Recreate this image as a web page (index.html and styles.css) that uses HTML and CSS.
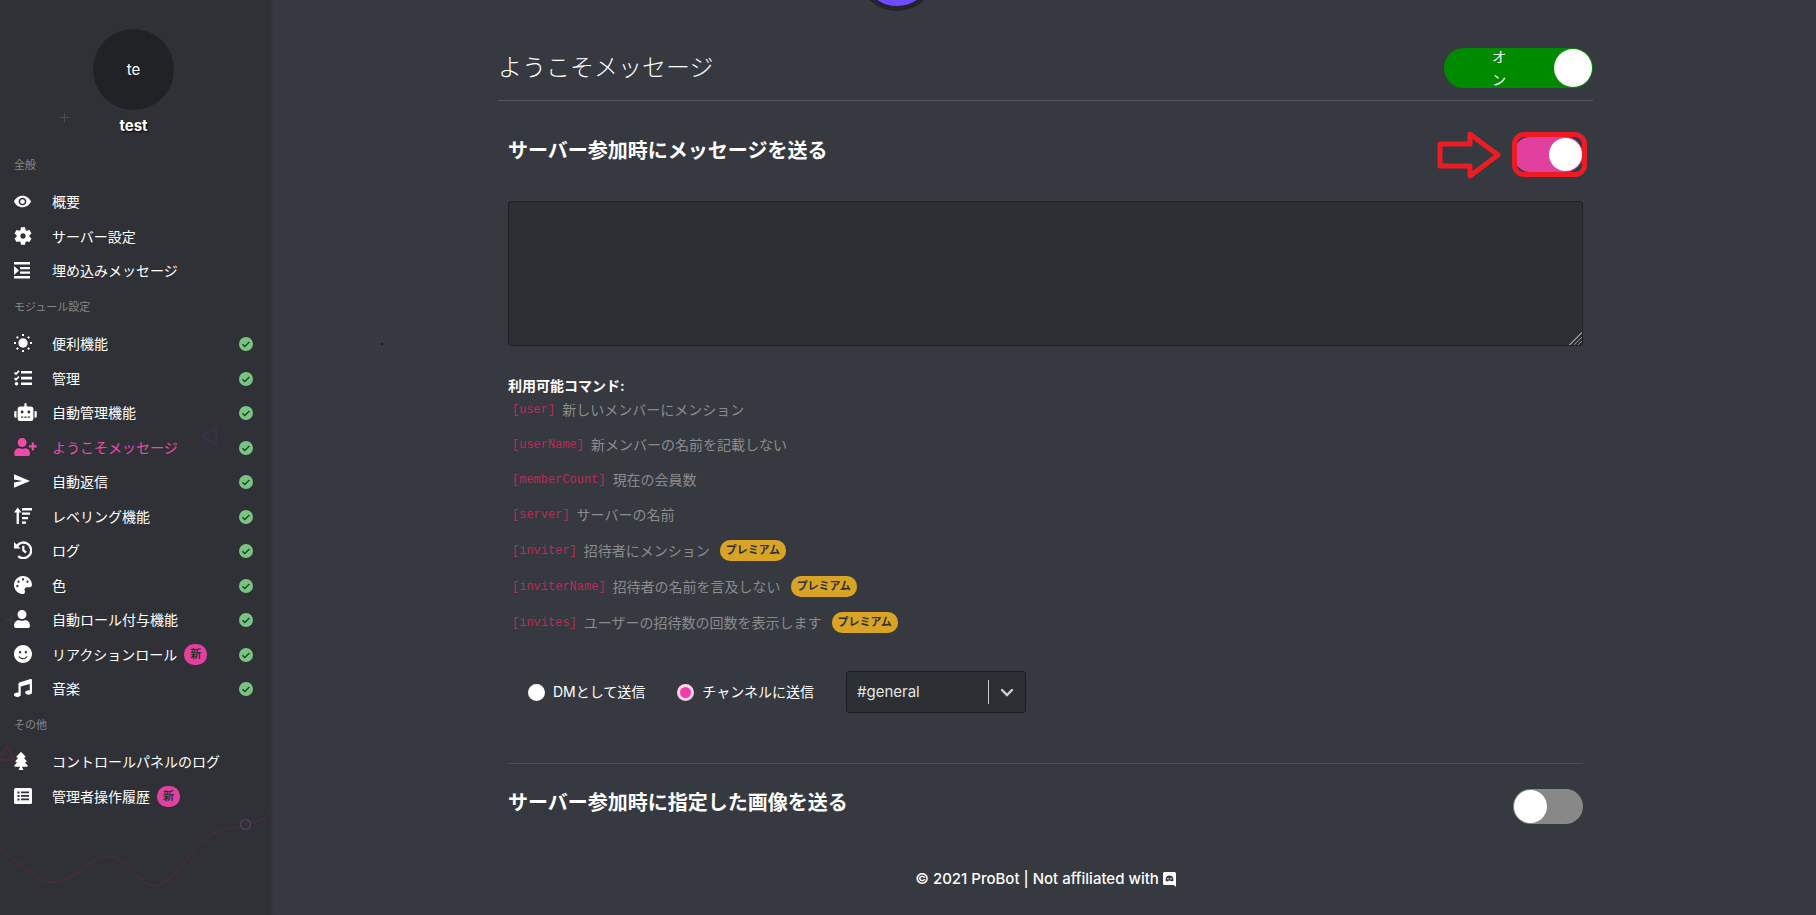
FILE: index.html
```html
<!DOCTYPE html>
<html lang="ja">
<head>
    <meta charset="UTF-8">
    <meta name="viewport" content="width=device-width, initial-scale=1.0">
    <title>ProBot - ようこそメッセージ</title>
    <link rel="stylesheet" href="styles.css">
</head>
<body>
    <!-- Shared icons -->
    <svg class="sprite" aria-hidden="true">
        <symbol id="i-check" viewBox="0 0 14 14">
            <circle cx="7" cy="7" r="7" fill="#7ac483"/>
            <path d="M3.400 7.200l2.400 2.300 4.600-4.600" fill="none" stroke="#27402c" stroke-width="1.400"/>
        </symbol>
    </svg>

    <aside class="sidebar">
        <svg class="sidebar-art" viewBox="0 0 270 915" fill="none" aria-hidden="true">
            <path d="M64.500 112.500v10M59.500 117.500h10" stroke="#484a50"/>
            <path d="M11 615v10M6 620h10" stroke="#3d4046"/>
            <path d="M216 428.500v16l-14-8z" stroke="#3d2f4a" stroke-width="2"/>
            <path d="M-3 760l10-13 7 13z" stroke="#4b2a40" stroke-width="2"/>
            <path d="M0 850C25 865 35 882 52 882C75 882 90 857 108 857C128 857 138 886 155 886C172 886 192 845 215 833C235 824 250 829 270 814" stroke="#432d3c" stroke-width="2"/>
            <circle cx="245.500" cy="824.500" r="5" fill="#3a2b3c" stroke="#4c4052" stroke-width="1.500"/>
        </svg>

        <div class="server">
            <div class="avatar">te</div>
            <strong class="server-name">test</strong>
        </div>

        <nav>
            <h3>全般</h3>
            <ul>
                <li><a href="#"><span class="icon"><svg width="17" height="17" viewBox="1 1 22 22"><path d="M12 4.500C7 4.500 2.730 7.610 1 12c1.730 4.390 6 7.500 11 7.500s9.270-3.110 11-7.500c-1.730-4.390-6-7.500-11-7.500zM12 17c-2.760 0-5-2.240-5-5s2.240-5 5-5 5 2.240 5 5-2.240 5-5 5zm0-8c-1.660 0-3 1.340-3 3s1.340 3 3 3 3-1.340 3-3-1.340-3-3-3z"/></svg></span>概要</a></li>
                <li><a href="#"><span class="icon"><svg width="18" height="18" viewBox="2 2 20 20"><path d="M19.140 12.940c.04-.3.06-.61.06-.94 0-.32-.02-.64-.07-.94l2.030-1.580c.18-.14.23-.41.12-.61l-1.920-3.320c-.12-.22-.37-.29-.59-.22l-2.390.96c-.5-.38-1.030-.7-1.620-.94l-.36-2.540c-.04-.24-.24-.41-.48-.41h-3.840c-.24 0-.43.17-.47.41l-.36 2.540c-.59.24-1.130.57-1.620.94l-2.390-.96c-.22-.08-.47 0-.59.22L2.740 8.870c-.12.21-.08.47.12.61l2.030 1.580c-.05.3-.09.63-.09.94s.02.64.07.94l-2.030 1.580c-.18.14-.23.41-.12.61l1.920 3.320c.12.22.37.29.59.22l2.390-.96c.5.38 1.030.7 1.620.94l.36 2.540c.05.24.24.41.48.41h3.840c.24 0 .44-.17.47-.41l.36-2.540c.59-.24 1.130-.56 1.620-.94l2.390.96c.22.08.47 0 .59-.22l1.920-3.320c.12-.22.07-.47-.12-.61l-2.010-1.580zM12 15c-1.660 0-3-1.340-3-3s1.340-3 3-3 3 1.340 3 3-1.340 3-3 3z"/></svg></span>サーバー設定</a></li>
                <li><a href="#"><span class="icon"><svg width="16" height="17" viewBox="0 0 16 17"><path d="M0 0h16v2.500H0zM6 5h10v2.200H6zM6 9.600h10v2.200H6zM0 14h16v2.500H0zM0 4v9l5-4.500z"/></svg></span>埋め込みメッセージ</a></li>
            </ul>

            <h3>モジュール設定</h3>
            <ul>
                <li><a href="#"><span class="icon"><svg width="18" height="18" viewBox="0 0 18 18"><circle cx="9" cy="9" r="4.700"/><path d="M8 0h2v2H8zM8 16h2v2H8zM0 8h2v2H0zM16 8h2v2h-2zM2 3.400L3.400 2l1.400 1.400-1.400 1.400zM13.200 3.400L14.600 2 16 3.400l-1.400 1.400zM2 14.600l1.400-1.400 1.400 1.400L3.400 16zM13.200 14.600l1.400-1.400 1.400 1.400-1.400 1.400z"/></svg></span>便利機能<svg class="check"><use href="#i-check"/></svg></a></li>
                <li><a href="#"><span class="icon"><svg width="18" height="16" viewBox="0 0 18 16"><path d="M7 1h11v2.600H7zM7 6.800h11v2.600H7zM7 12.500h11V15H7z"/><circle cx="2.500" cy="13.800" r="1.800"/><path d="M.5 2.500l1.500 1.500L5 .8M.5 8.200L2 9.700l3-3.200" fill="none" stroke="currentColor" stroke-width="1.700"/></svg></span>管理<svg class="check"><use href="#i-check"/></svg></a></li>
                <li><a href="#"><span class="icon"><svg width="23" height="18" viewBox="0 0 640 512"><path d="M32 224h32v192H32a32 32 0 0 1-32-32V256a32 32 0 0 1 32-32zm512-48v272a64 64 0 0 1-64 64H160a64 64 0 0 1-64-64V176a80 80 0 0 1 80-80h112V32a32 32 0 0 1 64 0v64h112a80 80 0 0 1 80 80zM264 256a40 40 0 1 0-40 40 40 40 0 0 0 40-40zm-8 128h-64v32h64zm96 0h-64v32h64zm104-128a40 40 0 1 0-40 40 40 40 0 0 0 40-40zm-8 128h-64v32h64zm192-128v128a32 32 0 0 1-32 32h-32V224h32a32 32 0 0 1 32 32z"/></svg></span>自動管理機能<svg class="check"><use href="#i-check"/></svg></a></li>
                <li class="active"><a href="#"><span class="icon"><svg width="23" height="18" viewBox="0 0 640 512"><path d="M624 208h-64v-64c0-8.800-7.200-16-16-16h-32c-8.800 0-16 7.200-16 16v64h-64c-8.800 0-16 7.200-16 16v32c0 8.800 7.200 16 16 16h64v64c0 8.800 7.200 16 16 16h32c8.800 0 16-7.200 16-16v-64h64c8.800 0 16-7.200 16-16v-32c0-8.800-7.200-16-16-16zm-400 48c70.700 0 128-57.300 128-128S294.700 0 224 0 96 57.300 96 128s57.300 128 128 128zm89.600 32h-16.700c-22.200 10.200-46.900 16-72.900 16s-50.600-5.800-72.900-16h-16.700C60.200 288 0 348.200 0 422.400V464c0 26.500 21.500 48 48 48h352c26.500 0 48-21.500 48-48v-41.600c0-74.200-60.200-134.400-134.400-134.400z"/></svg></span>ようこそメッセージ<svg class="check"><use href="#i-check"/></svg></a></li>
                <li><a href="#"><span class="icon"><svg width="16" height="14" viewBox="2 3 21 18"><path d="M2 21l21-9L2 3v7l11 2-11 2z"/></svg></span>自動返信<svg class="check"><use href="#i-check"/></svg></a></li>
                <li><a href="#"><span class="icon"><svg width="18" height="17" viewBox="0 0 18 17"><path d="M2.600 17V5.500H0L3.700.5l3.800 5H4.900V17zM8 1h10v2.400H8zM8 5.500h8v2.300H8zM8 10h6v2.300H8zM8 14.500h4v2.300H8z"/></svg></span>レベリング機能<svg class="check"><use href="#i-check"/></svg></a></li>
                <li><a href="#"><span class="icon"><svg width="18" height="18" viewBox="0 0 18 18"><path d="M3 4.800A7.800 7.800 0 1 1 4.200 15.200" fill="none" stroke="currentColor" stroke-width="2.400"/><path d="M0 1v6.600h6.600z"/><path d="M9.300 4.800v4.700l2.800 2" fill="none" stroke="currentColor" stroke-width="2.200"/></svg></span>ログ<svg class="check"><use href="#i-check"/></svg></a></li>
                <li><a href="#"><span class="icon"><svg width="18" height="18" viewBox="0 0 512 512"><path d="M204.300 5C104.900 24.400 24.800 104.300 5.200 203.400c-37 187 131.700 326.400 258.800 306.700 41.200-6.400 61.400-54.600 42.500-91.700-23.100-45.400 9.900-98.400 60.900-98.400h79.700c35.800 0 64.800-29.600 64.900-65.300C511.500 97.100 368.100-26.900 204.300 5zM96 320c-17.700 0-32-14.300-32-32s14.300-32 32-32 32 14.300 32 32-14.300 32-32 32zm32-128c-17.700 0-32-14.300-32-32s14.300-32 32-32 32 14.300 32 32-14.300 32-32 32zm128-64c-17.700 0-32-14.300-32-32s14.300-32 32-32 32 14.300 32 32-14.300 32-32 32zm128 64c-17.700 0-32-14.300-32-32s14.300-32 32-32 32 14.300 32 32-14.300 32-32 32z"/></svg></span>色<svg class="check"><use href="#i-check"/></svg></a></li>
                <li><a href="#"><span class="icon"><svg width="16" height="18" viewBox="0 0 448 512"><path d="M224 256c70.700 0 128-57.300 128-128S294.700 0 224 0 96 57.300 96 128s57.300 128 128 128zm89.600 32h-16.700c-22.200 10.200-46.900 16-72.900 16s-50.600-5.800-72.900-16h-16.700C60.200 288 0 348.200 0 422.400V464c0 26.500 21.500 48 48 48h352c26.500 0 48-21.500 48-48v-41.600c0-74.200-60.200-134.400-134.400-134.400z"/></svg></span>自動ロール付与機能<svg class="check"><use href="#i-check"/></svg></a></li>
                <li><a href="#"><span class="icon"><svg width="18" height="18" viewBox="0 8 496 496"><path d="M248 8C111 8 0 119 0 256s111 248 248 248 248-111 248-248S385 8 248 8zm80 168c17.700 0 32 14.300 32 32s-14.300 32-32 32-32-14.300-32-32 14.300-32 32-32zm-160 0c17.700 0 32 14.300 32 32s-14.300 32-32 32-32-14.300-32-32 14.300-32 32-32zm194.800 170.200C334.300 380.400 292.500 400 248 400s-86.300-19.600-114.800-53.800c-13.600-16.300 11-36.700 24.600-20.500 22.400 26.900 55.200 42.200 90.200 42.200s67.800-15.400 90.200-42.200c13.400-16.200 38.100 4.200 24.600 20.500z"/></svg></span>リアクションロール<span class="badge new">新</span><svg class="check"><use href="#i-check"/></svg></a></li>
                <li><a href="#"><span class="icon"><svg width="18" height="18" viewBox="0 0 512 512"><path d="M512 32c0-21.700-21.100-37-41.600-30.500L150.400 96c-13.300 4.200-22.400 16.500-22.400 30.500v261.400c-10-2.400-20.700-3.900-32-3.900-53 0-96 28.600-96 64s43 64 96 64 96-28.600 96-64V214.300l256-75v184.600c-10-2.400-20.700-3.900-32-3.900-53 0-96 28.600-96 64s43 64 96 64 96-28.600 96-64z"/></svg></span>音楽<svg class="check"><use href="#i-check"/></svg></a></li>
            </ul>

            <h3>その他</h3>
            <ul>
                <li><a href="#"><span class="icon"><svg width="14" height="18" viewBox="0 0 384 512"><path d="M378.300 378.500L298.400 288h30.600c9 0 17-5 20.800-13.100 3.800-8 2.600-17.200-3.300-24L268.400 160h28.900c9.100 0 17.300-5.300 20.900-13.600 3.500-8.100 1.900-17.600-4.300-24.100L203.700 4.800c-6-6.400-17.300-6.400-23.300 0L70.100 122.300c-6.100 6.500-7.800 16-4.300 24.100 3.600 8.300 11.800 13.600 20.900 13.600h28.900l-78.200 90.900c-5.800 6.800-7 16-3.200 24 3.800 8.100 11.700 13.100 20.800 13.100h30.600L5.700 378.500c-6 6.800-7.400 16.100-3.600 24.300 3.800 8 12 13.200 21 13.200H160v24.500l-30.300 48.400c-5.300 10.600 2.400 23.100 14.300 23.100h96c11.900 0 19.600-12.500 14.300-23.200L224 440.500V416h136.900c9 0 17.300-5.200 21-13.200 3.800-8.200 2.400-17.500-3.600-24.300z"/></svg></span>コントロールパネルのログ</a></li>
                <li><a href="#"><span class="icon"><svg width="18" height="16" viewBox="0 0 18 16"><rect width="18" height="16" rx="1.500"/><path d="M3.500 3.500h2v2h-2zM3.500 7h2v2h-2zM3.500 10.500h2v2h-2zM7 3.500h8v1.800H7zM7 7h8v1.800H7zM7 10.500h8v1.800H7z" fill="#2f3136"/></svg></span>管理者操作履歴<span class="badge new">新</span></a></li>
            </ul>
        </nav>
    </aside>

    <main>
        <div class="container">
            <div class="bubble"></div>
            <div class="speck"></div>

            <header class="page-header">
                <h1>ようこそメッセージ</h1>
                <label class="module-switch">
                    <input type="checkbox" class="switch switch-lg" aria-label="ようこそメッセージ" checked>
                    <span>オン</span>
                </label>
            </header>

            <section>
                <div class="section-header">
                    <h2><label for="send-message">サーバー参加時にメッセージを送る</label></h2>
                    <div class="marked">
                        <input type="checkbox" class="switch" id="send-message" checked>
                        <svg class="arrow" width="66" height="50" viewBox="0 0 66 50" aria-hidden="true"><path d="M3 14h30V4l28 21-28 21V36H3z" fill="none" stroke="#ed1c24" stroke-width="5" stroke-linejoin="round"/></svg>
                    </div>
                </div>
                <textarea aria-label="メッセージ"></textarea>

                <h4>利用可能コマンド:</h4>
                <ul class="commands">
                    <li><code>[user]</code>新しいメンバーにメンション</li>
                    <li><code>[userName]</code>新メンバーの名前を記載しない</li>
                    <li><code>[memberCount]</code>現在の会員数</li>
                    <li><code>[server]</code>サーバーの名前</li>
                    <li><code>[inviter]</code>招待者にメンション<span class="badge premium">プレミアム</span></li>
                    <li><code>[inviterName]</code>招待者の名前を言及しない<span class="badge premium">プレミアム</span></li>
                    <li><code>[invites]</code>ユーザーの招待数の回数を表示します<span class="badge premium">プレミアム</span></li>
                </ul>

                <div class="target">
                    <label><input type="radio" name="target">DMとして送信</label>
                    <label><input type="radio" name="target" checked>チャンネルに送信</label>
                    <div class="select">
                        <select aria-label="チャンネル">
                            <option>#general</option>
                        </select>
                        <span class="select-icon"><svg width="14" height="9" viewBox="0 0 14 9"><path d="M2 2l5 5 5-5" fill="none" stroke="#d0d1d3" stroke-width="2.400" stroke-linecap="round"/></svg></span>
                    </div>
                </div>
            </section>

            <section class="image-section">
                <div class="section-header">
                    <h2><label for="send-image">サーバー参加時に指定した画像を送る</label></h2>
                    <input type="checkbox" class="switch" id="send-image">
                </div>
            </section>

            <footer>
                © 2021 ProBot | Not affiliated with
                <svg width="13" height="15" viewBox="0 0 13 15" role="img" aria-label="Discord"><path d="M1.500 0h10A1.500 1.500 0 0 1 13 1.500V15l-2.200-2H1.500A1.500 1.500 0 0 1 0 11.500v-10A1.500 1.500 0 0 1 1.500 0z" fill="#fff"/><path d="M3.800 4.200c1.700-.8 3.700-.8 5.400 0 .9 1.400 1.300 3 1.200 4.600-.6.500-1.300.7-2 .8l-.6-.9H5.200l-.6.900c-.7-.1-1.400-.3-2-.8-.1-1.600.3-3.200 1.200-4.600z" fill="#36393f"/><circle cx="5" cy="6.800" r=".8" fill="#fff"/><circle cx="8" cy="6.800" r=".8" fill="#fff"/></svg>
            </footer>
        </div>
    </main>
</body>
</html>
```

FILE: styles.css
```css
* {
    box-sizing: border-box;
}
body {
    display: flex;
    min-height: 100vh;
    margin: 0;
    background-color: #36393f;
    color: #fff;
    font-family: Inter, "Noto Sans CJK JP", sans-serif;
    font-size: 14px;
    line-height: 20px;
}
h1, h2, h3, h4, ul {
    margin: 0;
    padding: 0;
}
ul {
    list-style: none;
}
.sprite {
    position: absolute;
    width: 0;
    height: 0;
}

/* Sidebar */
.sidebar {
    position: relative;
    flex: none;
    width: 270px;
    padding-top: 29px;
    background-color: #2f3136;
    box-shadow: 1px 0 4px rgba(0,0,0,0.2);
}
.sidebar-art {
    position: absolute;
    top: 0;
    left: 0;
    width: 100%;
}
.server {
    display: flex;
    flex-direction: column;
    align-items: center;
    gap: 6px;
    padding-right: 3px;
    margin-bottom: 19px;
    font-size: 15px;
}
.avatar {
    display: flex;
    align-items: center;
    justify-content: center;
    width: 81px;
    height: 81px;
    border-radius: 50%;
    background-color: #202225;
}
.server-name {
    text-shadow: 1px 1px 2px #000;
}
nav {
    position: relative;
}
nav h3 {
    margin: 9px 14px 10px;
    color: #85878a;
    font-size: 11px;
    font-weight: 400;
}
nav a {
    display: flex;
    align-items: center;
    height: 34px;
    padding: 0 17px 0 14px;
    color: #fff;
    text-decoration: none;
}
nav li:nth-child(even) a {
    height: 35px;
}
nav .active a {
    color: #ee4aa8;
}
.icon {
    display: flex;
    width: 38px;
    padding-bottom: 2px;
}
.icon svg {
    fill: currentColor;
}
.check {
    width: 14px;
    height: 14px;
    margin-left: auto;
}
.badge {
    padding: 2px 6px;
    border-radius: 10px;
    color: #2f3136;
    font-size: 11px;
    font-weight: 700;
    line-height: 17px;
}
.new {
    margin-left: 7px;
    background-color: #e2409f;
}
.premium {
    margin-left: 10px;
    background-color: #d9a426;
}

/* Content */
main {
    flex: 1;
    padding-left: 5px;
}
.container {
    position: relative;
    max-width: 1095px;
    margin: 0 auto;
}
.bubble {
    position: absolute;
    top: -69px;
    left: 359px;
    width: 80px;
    height: 80px;
    border: 5px solid #23252a;
    border-radius: 50%;
    background-color: #6d4cff;
}
.speck {
    position: absolute;
    top: 343px;
    left: -117px;
    width: 2px;
    height: 2px;
    border-radius: 50%;
    background-color: #15171c;
}
.page-header {
    display: flex;
    align-items: center;
    justify-content: space-between;
    padding: 48px 0 12px;
    border-bottom: 1px solid #54565d;
}
h1 {
    font-size: 24px;
    font-weight: 300;
    line-height: 32px;
}
h2 {
    font-size: 20px;
    line-height: 29px;
}
h4 {
    margin-top: 28px;
    line-height: 24px;
}
section {
    padding: 36px 10px 0;
}
.section-header {
    display: flex;
    align-items: flex-start;
    justify-content: space-between;
}

/* Switches */
.switch {
    display: block;
    appearance: none;
    width: 70px;
    height: 35px;
    margin: 0;
    padding: 1px;
    border-radius: 20px;
    background-color: #888;
}
.switch::before {
    content: "";
    display: block;
    width: 33px;
    height: 33px;
    border-radius: 50%;
    background-color: #fff;
}
.switch:checked {
    background-color: #e2409f;
}
.switch:checked::before {
    margin-left: auto;
}
.switch-lg {
    width: 149px;
    height: 40px;
}
.switch-lg::before {
    width: 38px;
    height: 38px;
}
.switch-lg:checked {
    background-color: #008a00;
}
.module-switch {
    position: relative;
}
.module-switch span {
    position: absolute;
    top: -3px;
    left: 48px;
    width: 14px;
    line-height: 23px;
}
.marked {
    position: relative;
}
.marked::after {
    content: "";
    position: absolute;
    inset: -5px -4px -5px -1px;
    border: 5px solid #ed1c24;
    border-radius: 12px;
}
.arrow {
    position: absolute;
    top: -7px;
    right: 80px;
}

textarea {
    display: block;
    width: 100%;
    height: 145px;
    margin-top: 29px;
    border: 1px solid #1e2023;
    border-radius: 3px;
    background-color: #2c2f33;
    color: #fff;
    font: inherit;
}
textarea::-webkit-resizer {
    background:
        linear-gradient(135deg, #2c2f33 50%, transparent 50%),
        repeating-linear-gradient(135deg, #8b8c8e 0 1px, #2c2f33 1px 3px);
}
.commands {
    display: flex;
    flex-direction: column;
    gap: 15px;
    margin-top: 2px;
    color: #8b8c8e;
}
.commands li {
    display: flex;
    align-items: center;
}
.commands code {
    margin: 0 7px 0 4px;
    color: #b52d58;
    font-family: "Liberation Mono", monospace;
    font-size: 12px;
}

/* Where the message is sent */
.target {
    display: flex;
    align-items: center;
    gap: 32px;
    margin-top: 38px;
    padding-left: 20px;
}
.target label {
    display: flex;
    align-items: center;
    gap: 8px;
}
.target input {
    appearance: none;
    width: 17px;
    height: 17px;
    margin: 0;
    border: 3px solid #fff;
    border-radius: 50%;
    background-color: #fff;
}
.target input:checked {
    border-color: #fbd3ea;
    background-color: #f03fa4;
}
.select {
    position: relative;
    width: 180px;
}
.select select {
    appearance: none;
    width: 100%;
    height: 42px;
    padding: 0 10px;
    border: 1px solid #1b1d20;
    border-radius: 3px;
    background-color: #2c2f33;
    color: #e4e5e6;
    font: inherit;
    font-size: 15px;
}
.select-icon {
    position: absolute;
    top: 9px;
    right: 0;
    display: flex;
    align-items: center;
    justify-content: center;
    width: 38px;
    height: 24px;
    border-left: 1px solid #ccc;
    pointer-events: none;
}
.image-section {
    margin: 50px 10px 0;
    padding: 25px 0 0;
    border-top: 1px solid #4b4e54;
}
footer {
    display: flex;
    align-items: center;
    justify-content: center;
    gap: 4px;
    margin-top: 45px;
    font-size: 15px;
    font-weight: 500;
}
```
